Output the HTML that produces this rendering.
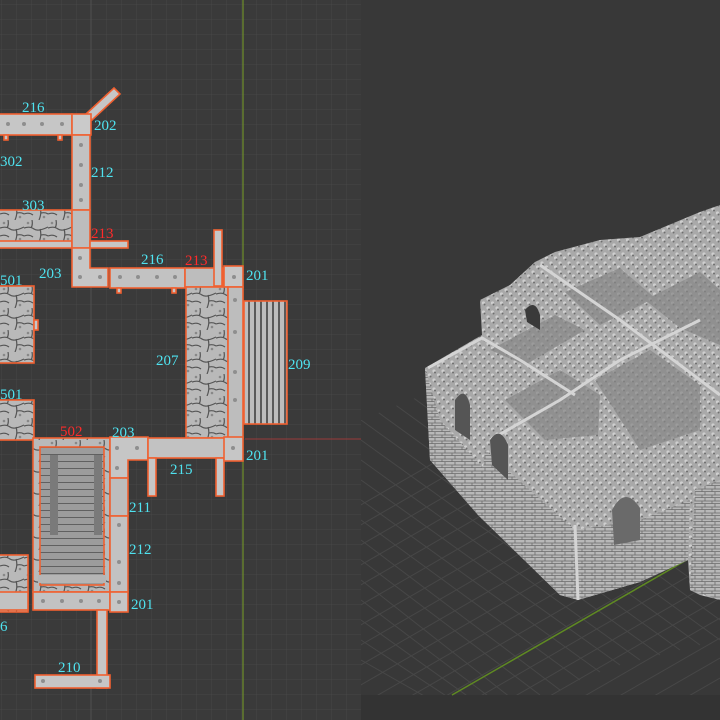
<!DOCTYPE html>
<html><head><meta charset="utf-8"><style>
html,body{margin:0;padding:0;background:#333;overflow:hidden;width:720px;height:720px;}
body{position:relative;font-family:"Liberation Serif",serif;}
svg{position:absolute;left:0;top:0;display:block;}
.c{fill:#4fe3f0;font-size:15px;font-family:"Liberation Serif",serif;}
.r{fill:#ff2a2a;font-size:15px;font-family:"Liberation Serif",serif;}
</style></head><body>
<svg width="720" height="720" viewBox="0 0 720 720">
<defs>
<pattern id="g" width="15" height="15" patternUnits="userSpaceOnUse" x="1" y="4">
<path d="M0 0H15M0 0V15" stroke="#474747" stroke-width="1" fill="none"/>
</pattern>
<pattern id="stone" width="24" height="22" patternUnits="userSpaceOnUse">
<rect width="24" height="22" fill="#b9b9b9"/>
<path d="M0 8 Q6 6 10 9 T24 7 M8 0 Q9 5 7 8 M16 9 Q18 15 15 22 M0 16 Q5 14 9 17 M17 15 Q21 14 24 16" stroke="#555" stroke-width="1.2" fill="none"/>
<circle cx="4" cy="3" r="1.3" fill="#888"/><circle cx="20" cy="19" r="1.3" fill="#888"/>
</pattern>
<pattern id="bars" width="6" height="10" patternUnits="userSpaceOnUse">
<rect width="6" height="10" fill="#bdbdbd"/><rect x="2" width="2" height="10" fill="#5a5a5a"/>
</pattern>
<pattern id="wood" width="10" height="7" patternUnits="userSpaceOnUse">
<rect width="10" height="7" fill="#9c9c9c"/><path d="M0 6.5H10" stroke="#606060"/>
</pattern>
<pattern id="brick" width="10" height="6" patternUnits="userSpaceOnUse">
<rect width="10" height="6" fill="#b8b8b8"/><path d="M0 5.5H10M5 0V3M0 3H10M2 3V6" stroke="#6a6a6a" stroke-width="0.8"/>
</pattern>
<pattern id="rough" width="9" height="9" patternUnits="userSpaceOnUse">
<rect width="9" height="9" fill="#a9a9a9"/>
<circle cx="2" cy="2" r="1.6" fill="#cfcfcf"/><circle cx="6.5" cy="6" r="1.6" fill="#cfcfcf"/>
<circle cx="3" cy="3.5" r="1" fill="#6e6e6e"/><circle cx="7.5" cy="7.5" r="1" fill="#6e6e6e"/>
</pattern>
</defs>
<!-- left panel -->
<rect x="0" y="0" width="361" height="720" fill="#3a3a3a"/>
<rect x="0" y="0" width="361" height="720" fill="url(#g)"/>
<line x1="91" y1="0" x2="91" y2="720" stroke="#505050"/>
<line x1="243" y1="0" x2="243" y2="720" stroke="#6f8f2a" stroke-width="1.2"/>
<line x1="245" y1="439" x2="361" y2="439" stroke="#9a3a3a" stroke-width="1"/>

<g stroke="#f06030" stroke-width="1.6">
<rect x="-2" y="114" width="74" height="21" fill="#c6c6c6"/>
<rect x="4" y="135" width="4" height="5" fill="#c6c6c6"/><rect x="58" y="135" width="4" height="5" fill="#c6c6c6"/>
<path d="M86 114 L114 88 L120 94 L92 120 Z" fill="#c6c6c6"/>
<rect x="72" y="114" width="19" height="21" fill="#cacaca"/>
<rect x="72" y="135" width="18" height="75" fill="#c2c2c2"/>
<rect x="-2" y="210" width="74" height="34" fill="url(#stone)"/>
<rect x="-2" y="241" width="74" height="7" fill="#c6c6c6"/>
<rect x="72" y="210" width="18" height="38" fill="#bdbdbd"/>
<rect x="90" y="241" width="38" height="7" fill="#c6c6c6"/>
<path d="M72 248 H90 V268 H108 V287 H72 Z" fill="#c6c6c6"/>
<rect x="110" y="268" width="75" height="20" fill="#c2c2c2"/>
<rect x="117" y="288" width="4" height="5" fill="#c6c6c6"/><rect x="172" y="288" width="4" height="5" fill="#c6c6c6"/>
<rect x="185" y="268" width="38" height="19" fill="#bdbdbd"/>
<rect x="214" y="230" width="8" height="56" fill="#c6c6c6"/>
<rect x="224" y="266" width="19" height="21" fill="#c6c6c6"/>
<rect x="186" y="287" width="42" height="151" fill="url(#stone)"/>
<rect x="228" y="287" width="15" height="151" fill="#bdbdbd"/>
<rect x="244" y="301" width="43" height="123" fill="url(#bars)"/>
<rect x="-2" y="286" width="36" height="77" fill="url(#stone)"/>
<rect x="34" y="320" width="4" height="10" fill="#c6c6c6"/>
<rect x="-2" y="400" width="36" height="40" fill="url(#stone)"/>
<rect x="33" y="438" width="77" height="154" fill="url(#stone)"/>
<rect x="40" y="447" width="64" height="138" fill="url(#wood)"/>
<rect x="50" y="455" width="8" height="80" fill="#7a7a7a" stroke="none"/>
<rect x="94" y="455" width="8" height="80" fill="#7a7a7a" stroke="none"/>
<rect x="38" y="575" width="68" height="8" fill="#b5b5b5" stroke="none"/>
<path d="M110 437 H148 V460 H128 V478 H110 Z" fill="#c6c6c6"/>
<rect x="148" y="438" width="77" height="20" fill="#c2c2c2"/>
<rect x="148" y="458" width="8" height="38" fill="#c6c6c6"/>
<rect x="216" y="458" width="8" height="38" fill="#c6c6c6"/>
<rect x="224" y="437" width="19" height="24" fill="#c6c6c6"/>
<rect x="110" y="478" width="18" height="38" fill="#bdbdbd"/>
<rect x="110" y="516" width="18" height="76" fill="#c2c2c2"/>
<rect x="33" y="592" width="77" height="18" fill="#c2c2c2"/>
<rect x="110" y="592" width="18" height="20" fill="#c6c6c6"/>
<rect x="-2" y="555" width="30" height="57" fill="url(#stone)"/>
<rect x="-2" y="592" width="30" height="18" fill="#c2c2c2"/>
<rect x="97" y="610" width="10" height="78" fill="#c6c6c6"/>
<rect x="35" y="675" width="75" height="13" fill="#c6c6c6"/>
</g>
<g fill="#8e8e8e">
<circle cx="8" cy="124" r="2"/><circle cx="24" cy="124" r="2"/><circle cx="42" cy="124" r="2"/><circle cx="62" cy="124" r="2"/>
<circle cx="81" cy="145" r="2"/><circle cx="81" cy="165" r="2"/><circle cx="81" cy="185" r="2"/><circle cx="81" cy="200" r="2"/>
<circle cx="80" cy="258" r="2"/><circle cx="80" cy="277" r="2"/><circle cx="100" cy="277" r="2"/>
<circle cx="120" cy="277" r="2"/><circle cx="138" cy="277" r="2"/><circle cx="157" cy="277" r="2"/><circle cx="175" cy="277" r="2"/>
<circle cx="234" cy="277" r="2"/><circle cx="235" cy="300" r="2"/><circle cx="235" cy="332" r="2"/><circle cx="235" cy="372" r="2"/><circle cx="235" cy="400" r="2"/>
<circle cx="117" cy="448" r="2"/><circle cx="137" cy="448" r="2"/><circle cx="117" cy="468" r="2"/><circle cx="233" cy="448" r="2"/>
<circle cx="119" cy="525" r="2"/><circle cx="119" cy="562" r="2"/><circle cx="119" cy="583" r="2"/><circle cx="119" cy="602" r="2"/>
<circle cx="43" cy="601" r="2"/><circle cx="62" cy="601" r="2"/><circle cx="81" cy="601" r="2"/><circle cx="99" cy="601" r="2"/>
<circle cx="43" cy="681" r="2"/><circle cx="100" cy="681" r="2"/>
</g>
<text x="22" y="112" class="c">216</text>
<text x="94" y="130" class="c">202</text>
<text x="0" y="166" class="c">302</text>
<text x="91" y="177" class="c">212</text>
<text x="22" y="210" class="c">303</text>
<text x="141" y="264" class="c">216</text>
<text x="246" y="280" class="c">201</text>
<text x="39" y="278" class="c">203</text>
<text x="0" y="285" class="c">501</text>
<text x="156" y="365" class="c">207</text>
<text x="288" y="369" class="c">209</text>
<text x="0" y="399" class="c">501</text>
<text x="112" y="437" class="c">203</text>
<text x="246" y="460" class="c">201</text>
<text x="170" y="474" class="c">215</text>
<text x="129" y="512" class="c">211</text>
<text x="129" y="554" class="c">212</text>
<text x="131" y="609" class="c">201</text>
<text x="0" y="631" class="c">6</text>
<text x="58" y="672" class="c">210</text>
<text x="91" y="238" class="r">213</text>
<text x="185" y="265" class="r">213</text>
<text x="60" y="436" class="r">502</text>

<!-- right panel -->
<rect x="361" y="0" width="359" height="720" fill="#383838"/>
<rect x="361" y="695" width="359" height="25" fill="#333"/>
<clipPath id="rc"><path d="M361 420 L460 380 L720 560 L720 695 L361 695 Z"/></clipPath>
<g clip-path="url(#rc)" stroke="#474747" stroke-width="1">
<path d="M300 560 L720 318 M300 580 L720 338 M300 600 L720 358 M300 620 L720 378 M300 640 L720 398 M300 660 L720 418 M300 680 L720 438 M300 700 L720 458 M300 720 L720 478 M300 740 L720 498 M300 760 L720 518 M300 780 L720 538 M300 800 L720 558 M300 820 L720 578 M300 840 L720 598 M300 860 L720 618 M300 880 L720 638 M300 900 L720 658 M300 920 L720 678 M300 940 L720 698 M300 540 L720 298"/>
<path d="M361 380 L720 640 M361 400 L700 645 M361 420 L680 650 M361 440 L660 655 M361 460 L640 660 M361 480 L620 665 M361 500 L600 672 M361 520 L580 680 M361 540 L560 690 M361 560 L540 695 M361 580 L520 705 M361 600 L500 705 M361 620 L480 705 M361 640 L460 705 M361 660 L440 705 M361 360 L720 620 M361 340 L720 600"/>
</g>
<line x1="452" y1="695" x2="690" y2="558" stroke="#5f8a22" stroke-width="1.5"/>

<!-- 3D model -->
<path d="M425 368 L482 335 L480 300 L510 285 L535 262 L555 252 L600 240 L640 237 L700 212 L720 205 L720 600 L700 595 L690 590 L688 560 L640 582 L578 600 L560 595 L478 515 L430 460 Z" fill="url(#rough)"/>
<path d="M425 368 L430 460 L478 515 L485 470 L440 420 Z" fill="url(#brick)"/>
<path d="M478 515 L560 595 L578 600 L575 530 L530 490 L485 450 Z" fill="url(#brick)"/>
<path d="M578 600 L640 582 L688 560 L690 500 L640 520 L575 530 Z" fill="url(#brick)"/>
<path d="M690 590 L720 600 L720 480 L695 490 Z" fill="url(#brick)"/>
<g fill="#868686" opacity="0.7">
<path d="M490 350 L555 315 L585 330 L525 365 Z"/>
<path d="M505 400 L560 370 L600 395 L598 435 L545 440 Z"/>
<path d="M595 380 L650 350 L700 385 L700 430 L640 450 Z"/>
<path d="M565 292 L620 268 L655 298 L600 325 Z"/>
<path d="M645 300 L700 272 L720 290 L720 345 L680 328 Z"/>
</g>
<g stroke="#d4d4d4" stroke-width="3" fill="none">
<path d="M428 368 L482 338 L520 360 L575 395"/>
<path d="M540 265 L620 320 L720 395"/>
<path d="M490 440 L560 400 L620 360 L700 320"/>
<path d="M578 600 L575 525"/>
</g>
<path d="M455 400 Q465 385 470 405 L470 440 L455 430 Z" fill="#555"/>
<path d="M490 440 Q500 425 508 445 L508 480 L492 465 Z" fill="#555"/>
<path d="M525 310 Q535 298 540 315 L540 330 L527 322 Z" fill="#3a3a3a"/>
<path d="M612 510 Q625 485 640 508 L640 540 L614 545 Z" fill="#6a6a6a"/>
</svg>
</body></html>
